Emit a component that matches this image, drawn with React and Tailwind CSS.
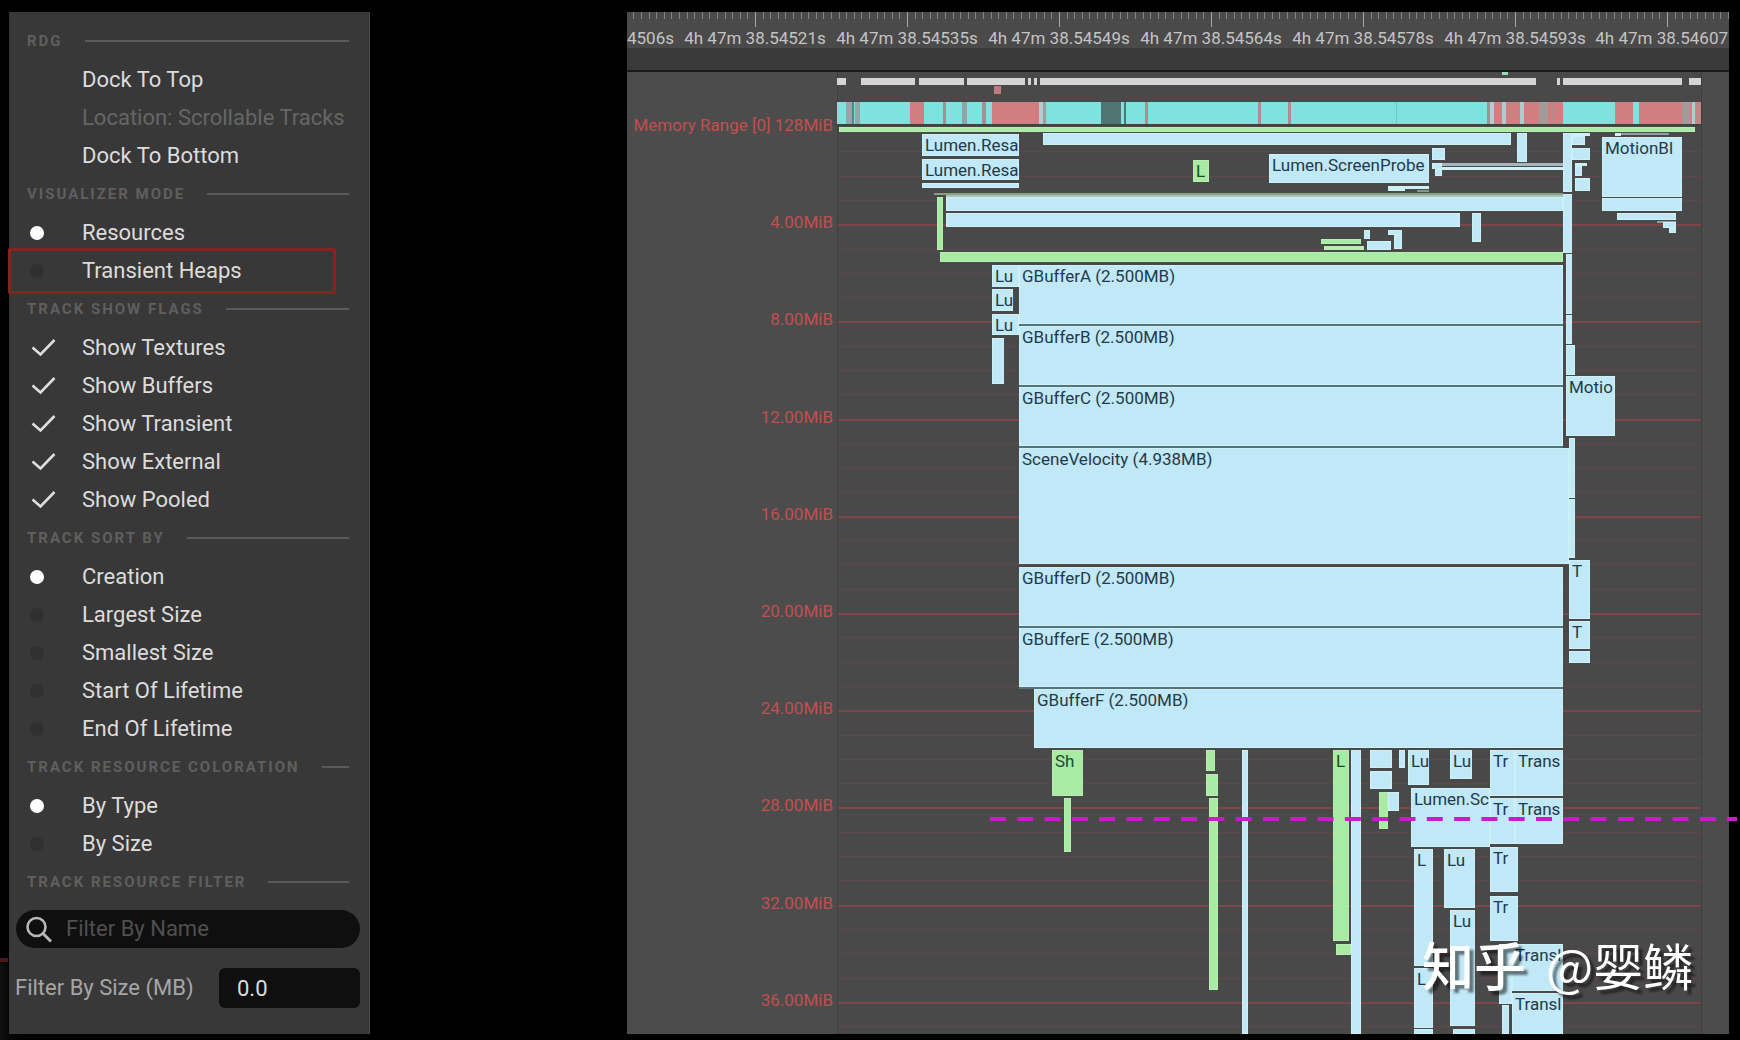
import { Fragment } from "react"

const RULER_LABELS = [
    { x: 674, anchor: "end", text: "4506s" },
    { x: 755, anchor: "middle", text: "4h 47m 38.54521s" },
    { x: 907, anchor: "middle", text: "4h 47m 38.54535s" },
    { x: 1059, anchor: "middle", text: "4h 47m 38.54549s" },
    { x: 1211, anchor: "middle", text: "4h 47m 38.54564s" },
    { x: 1363, anchor: "middle", text: "4h 47m 38.54578s" },
    { x: 1515, anchor: "middle", text: "4h 47m 38.54593s" },
    { x: 1728, anchor: "end", text: "4h 47m 38.54607" },
]

const SIZE_LABELS = [
    "Memory Range [0] 128MiB",
    "4.00MiB",
    "8.00MiB",
    "12.00MiB",
    "16.00MiB",
    "20.00MiB",
    "24.00MiB",
    "28.00MiB",
    "32.00MiB",
    "36.00MiB",
]

// every bar below is [x1, y1, x2, y2, label?]
const PASSES = [
    [837, 846], [861, 915], [919, 964], [967, 1025], [1028, 1031], [1034, 1037],
    [1040, 1536], [1557, 1560], [1563, 1682], [1689, 1701],
]

// [x1, x2, fill]
const RANGES = [
    [837, 1701, "#7de3df"],
    [837, 839, "#a3cfd0"],
    [846, 852, "#94a8ac"],
    [852, 854, "#4f8a86"],
    [855, 860, "#94a8ac"],
    [910, 924, "#cf7f80"],
    [943, 946, "#a58f93"],
    [962, 967, "#90a5a6"],
    [982, 986, "#a58f93"],
    [992, 1039, "#cf7f80"],
    [1039, 1043, "#b4cdd0"],
    [1043, 1046, "#9a9fa3"],
    [1101, 1121, "#507472"],
    [1124, 1126, "#507472"],
    [1145, 1148, "#b08a8d"],
    [1258, 1261, "#b08a8d"],
    [1288, 1291, "#b08a8d"],
    [1396, 1397, "#6bcbc8"],
    [1487, 1490, "#a58f93"],
    [1490, 1494, "#b4cdd0"],
    [1494, 1502, "#cf7f80"],
    [1502, 1506, "#a9cfd0"],
    [1506, 1520, "#cf7f80"],
    [1520, 1524, "#a9cfd0"],
    [1524, 1539, "#cf7f80"],
    [1539, 1548, "#a39b99"],
    [1548, 1563, "#cf7f80"],
    [1552, 1554, "#b98a8a"],
    [1615, 1633, "#cf7f80"],
    [1639, 1682, "#cf7f80"],
    [1682, 1690, "#a39b99"],
    [1690, 1692, "#cf7f80"],
    [1692, 1695, "#a9cfd0"],
    [1695, 1701, "#c68687"],
]

const TEXTURES = [
    [922, 134, 1019, 156, "Lumen.Resa"],
    [922, 159, 1019, 180, "Lumen.Resa"],
    [922, 183, 1019, 188],
    [1043, 133, 1511, 145],
    [1269, 154, 1429, 183, "Lumen.ScreenProbe"],
    [1388, 186, 1429, 189],
    [1388, 189, 1405, 191],
    [1432, 148, 1445, 160],
    [1432, 163, 1442, 169],
    [1435, 169, 1442, 176],
    [1442, 167, 1563, 170],
    [1517, 133, 1527, 162],
    [946, 197, 1563, 211],
    [946, 213, 1460, 227],
    [1472, 213, 1481, 242],
    [1364, 230, 1370, 239],
    [1367, 241, 1391, 250],
    [1388, 230, 1402, 235],
    [1394, 235, 1402, 249],
    [1563, 133, 1572, 192],
    [1563, 194, 1572, 253],
    [1566, 254, 1572, 314],
    [1566, 315, 1572, 344],
    [1566, 345, 1575, 375],
    [1572, 133, 1590, 136],
    [1572, 136, 1585, 145],
    [1572, 148, 1590, 160],
    [1575, 163, 1587, 166],
    [1575, 166, 1582, 176],
    [1575, 178, 1590, 191],
    [1615, 133, 1621, 136],
    [1602, 137, 1682, 197, "MotionBl"],
    [1602, 198, 1682, 211],
    [1617, 213, 1676, 220],
    [1663, 222, 1676, 228],
    [1669, 228, 1676, 233],
    [1566, 376, 1615, 436, "Motio"],
    [992, 265, 1019, 287, "Lu"],
    [992, 289, 1013, 311, "Lu"],
    [992, 314, 1019, 335, "Lu"],
    [992, 338, 1004, 384],
    [1019, 265, 1563, 324, "GBufferA (2.500MB)"],
    [1019, 326, 1563, 385, "GBufferB (2.500MB)"],
    [1019, 387, 1563, 446, "GBufferC (2.500MB)"],
    [1019, 448, 1569, 564, "SceneVelocity (4.938MB)"],
    [1569, 438, 1575, 498],
    [1569, 499, 1575, 558],
    [1569, 560, 1590, 619, "T"],
    [1569, 621, 1590, 649, "T"],
    [1569, 651, 1590, 663],
    [1019, 567, 1563, 626, "GBufferD (2.500MB)"],
    [1019, 628, 1563, 687, "GBufferE (2.500MB)"],
    [1034, 689, 1563, 748, "GBufferF (2.500MB)"],
    [1242, 750, 1248, 1034],
    [1351, 750, 1361, 1034],
    [1370, 750, 1392, 768],
    [1370, 771, 1392, 789],
    [1388, 792, 1399, 811],
    [1399, 750, 1405, 768],
    [1408, 750, 1429, 785, "Lu"],
    [1450, 750, 1472, 779, "Lu"],
    [1411, 788, 1490, 847, "Lumen.Sc"],
    [1490, 750, 1515, 796, "Tr"],
    [1515, 750, 1563, 796, "Trans"],
    [1490, 798, 1515, 844, "Tr"],
    [1515, 798, 1563, 844, "Trans"],
    [1414, 849, 1433, 966, "L"],
    [1414, 968, 1433, 1028, "L"],
    [1414, 1029, 1433, 1034],
    [1444, 849, 1475, 908, "Lu"],
    [1450, 910, 1475, 1026, "Lu"],
    [1453, 1029, 1475, 1034],
    [1490, 847, 1518, 892, "Tr"],
    [1490, 896, 1518, 941, "Tr"],
    [1499, 944, 1512, 1004],
    [1502, 1005, 1509, 1034],
    [1512, 944, 1563, 991, "Transl"],
    [1512, 993, 1563, 1034, "Transl"],
]

const BUFFERS = [
    [839, 127, 1695, 132],
    [1193, 160, 1209, 182, "L"],
    [937, 197, 943, 250],
    [940, 252, 1563, 262],
    [1321, 239, 1361, 244],
    [1324, 246, 1364, 250],
    [1052, 750, 1083, 796, "Sh"],
    [1064, 798, 1071, 852],
    [1206, 750, 1215, 771],
    [1206, 774, 1218, 796],
    [1209, 798, 1218, 990],
    [1333, 750, 1349, 941, "L"],
    [1336, 944, 1351, 955],
    [1379, 792, 1388, 829],
]

function Bars({ bars, fill, edge, ink }) {
    return bars.map(([x1, y1, x2, y2, label]) => (
        <Fragment key={`${x1}-${y1}`}>
            <rect x={x1} y={y1} width={x2 - x1} height={y2 - y1} fill={edge} />
            {x2 - x1 > 4 && y2 - y1 > 4 && (
                <rect x={x1 + 1} y={y1 + 1} width={x2 - x1 - 2} height={y2 - y1 - 2} fill={fill} />
            )}
            {label && (
                <svg x={x1} y={y1} width={x2 - x1} height={y2 - y1}>
                    <text x="3" y="17" fill={ink}>{label}</text>
                </svg>
            )}
        </Fragment>
    ))
}

function Ruler() {
    const ticks = Array.from({ length: 145 }, (_, i) => i)
    return (
        <svg viewBox="627 12 1102 36" className="block w-full bg-[#4a4a4a] font-[Roboto,sans-serif] text-[17px]">
            {ticks.map((i) => {
                const major = i % 20 === 16
                return (
                    <rect
                        key={i}
                        x={Math.round(633.4 + i * 7.6)}
                        y="12"
                        width="1"
                        height={major ? 15 : 7}
                        fill={major ? "#a8a8a8" : "#858585"}
                    />
                )
            })}
            {RULER_LABELS.map(({ x, anchor, text }) => (
                <text key={text} x={x} y="44" textAnchor={anchor} fill="#c4c4c4">{text}</text>
            ))}
        </svg>
    )
}

function Tracks() {
    return (
        <svg
            viewBox="627 72 1102 962"
            className="block w-full overflow-visible bg-[#4c4c4c] font-[Roboto,sans-serif] text-[17px]"
        >
            {/* Allocation area */}
            <rect x="837" y="72" width="865" height="962" fill="#494949" />
            <rect x="837" y="72" width="1" height="962" fill="#3f3f3f" />
            <rect x="1701" y="72" width="1" height="962" fill="#3f3f3f" />

            {/* Memory grid, one line per MiB */}
            {Array.from({ length: 37 }, (_, i) => i + 1).map((i) => (
                <rect
                    key={i}
                    x="838"
                    y={Math.round(127 + i * 24.3)}
                    width="863"
                    height={i % 4 === 0 ? 2 : 1}
                    fill={i % 4 === 0 ? "#7c4749" : "#604849"}
                />
            ))}
            {SIZE_LABELS.map((label, i) => (
                <text key={label} x="833" y={Math.round(131 + i * 97.2)} textAnchor="end" fill="#c05050">
                    {label}
                </text>
            ))}

            {/* Passes */}
            {PASSES.map(([x1, x2]) => (
                <rect key={x1} x={x1} y="78" width={x2 - x1} height="7" fill="#d4d4d4" />
            ))}
            <rect x="994" y="86" width="7" height="8" fill="#bf7b80" />
            <rect x="1502" y="72" width="6" height="3" fill="#8fe0b8" />

            {/* Memory range overview */}
            {RANGES.map(([x1, x2, fill]) => (
                <rect key={`${x1}-${x2}`} x={x1} y="102" width={x2 - x1} height="22" fill={fill} />
            ))}
            <rect x="837" y="124" width="864" height="2" fill="#3f4442" />

            {/* Thin allocations */}
            <rect x="934" y="193" width="629" height="2" fill="#86a184" />
            <rect x="946" y="195" width="617" height="2" fill="#aebfb8" />
            <rect x="1442" y="163" width="121" height="3" fill="#a9b5b8" />
            <rect x="1417" y="190" width="12" height="2" fill="#7f9c86" />
            <rect x="1621" y="133" width="48" height="2" fill="#93a0a3" />
            <rect x="1657" y="221" width="19" height="2" fill="#93a0a3" />

            {/* Block outlines between stacked textures */}
            <rect x="1019" y="323" width="544" height="126" fill="#587279" />
            <rect x="1019" y="625" width="544" height="64" fill="#587279" />

            <Bars bars={BUFFERS} fill="#a9eaa5" edge="#b6eeb2" ink="#1d4a2a" />
            <Bars bars={TEXTURES} fill="#c1e8f6" edge="#ccf1f7" ink="#1f3a4a" />

            {/* Budget marker */}
            <line
                x1="990"
                y1="819"
                x2="1737"
                y2="819"
                stroke="#d016d0"
                strokeWidth="4"
                strokeDasharray="16 11.3"
            />

            <g className="font-['Noto_Sans_CJK_SC',sans-serif] drop-shadow-[4px_4px_1px_rgba(0,0,0,0.5)]" fill="#fff">
                <text x="1422" y="986" className="text-[52px] font-medium">知乎</text>
                <text x="1546" y="986" className="text-[50px]">@婴鳞</text>
            </g>
        </svg>
    )
}

function Heading({ children }) {
    return (
        <h2 className="mb-px flex h-[38px] items-center gap-[22px] pr-5 pl-[18px] text-[15px] font-bold tracking-[2px] text-[#5f5f5f]">
            {children}
            <span className="h-[2px] flex-1 bg-[#5a5a5a]" />
        </h2>
    )
}

function Radio({ name, label, checked }) {
    return (
        <label className="flex h-[38px] items-center gap-[38px] pl-[21px]">
            <input
                type="radio"
                name={name}
                defaultChecked={checked}
                className="size-[14px] appearance-none rounded-full bg-[#303030] checked:bg-white"
            />
            {label}
        </label>
    )
}

function Flag({ label }) {
    return (
        <label className="flex h-[38px] items-center gap-[26px] pl-[22px]">
            <input type="checkbox" defaultChecked className="peer sr-only" />
            <svg viewBox="0 0 25 20" className="invisible h-5 w-[25px] peer-checked:visible" fill="none" stroke="#dedede" strokeWidth="2.6">
                <path d="M1.5 9.5 L9.5 16.5 L23.5 2" />
            </svg>
            {label}
        </label>
    )
}

function Menu() {
    return (
        <aside className="w-[361px] shrink-0 border-r border-[#484848] bg-[#383838] pt-[10px] pb-[26px] text-[#dcdcdc]">
            <Heading>RDG</Heading>
            <button className="block h-[38px] w-full pl-[73px] text-left">Dock To Top</button>
            <button disabled className="block h-[38px] w-full pl-[73px] text-left whitespace-nowrap text-[#666666]">
                Location: Scrollable Tracks
            </button>
            <button className="block h-[38px] w-full pl-[73px] text-left">Dock To Bottom</button>

            <Heading>VISUALIZER MODE</Heading>
            <Radio name="mode" label="Resources" checked />
            <div className="relative">
                <Radio name="mode" label="Transient Heaps" />
                <div className="pointer-events-none absolute -top-1 right-[33px] -bottom-1 -left-px rounded-xs border-3 border-[#8c2020]" />
            </div>

            <Heading>TRACK SHOW FLAGS</Heading>
            <Flag label="Show Textures" />
            <Flag label="Show Buffers" />
            <Flag label="Show Transient" />
            <Flag label="Show External" />
            <Flag label="Show Pooled" />

            <Heading>TRACK SORT BY</Heading>
            <Radio name="sort" label="Creation" checked />
            <Radio name="sort" label="Largest Size" />
            <Radio name="sort" label="Smallest Size" />
            <Radio name="sort" label="Start Of Lifetime" />
            <Radio name="sort" label="End Of Lifetime" />

            <Heading>TRACK RESOURCE COLORATION</Heading>
            <Radio name="color" label="By Type" checked />
            <Radio name="color" label="By Size" />

            <Heading>TRACK RESOURCE FILTER</Heading>
            <label className="mt-[9px] mr-[9px] ml-[7px] flex h-[38px] items-center gap-[13px] rounded-full bg-[#0f0f0f] pr-4 pl-[9px]">
                <svg viewBox="0 0 28 28" className="size-7 shrink-0" fill="none" stroke="#b8b8b8" strokeWidth="2.6">
                    <circle cx="11.5" cy="12" r="9" />
                    <path d="M18 18.5 L26 26.5" strokeWidth="3" />
                </svg>
                <input
                    aria-label="Filter By Name"
                    placeholder="Filter By Name"
                    className="w-full min-w-0 bg-transparent outline-none placeholder:text-[#505050]"
                />
            </label>
            <div className="mt-5 flex items-center justify-between pr-[9px] pl-[6px]">
                <label htmlFor="size" className="text-[#a6a6a6]">Filter By Size (MB)</label>
                <input
                    id="size"
                    defaultValue="0.0"
                    className="h-10 w-[141px] rounded-md bg-[#0f0f0f] px-[18px] outline-none"
                />
            </div>
        </aside>
    )
}

export default function App() {
    return (
        <div className="relative min-h-screen bg-black pt-3 font-[Roboto,sans-serif] text-[22px] leading-7">
            <div className="absolute bottom-0 left-0 h-[82px] w-full bg-linear-to-r from-[#101012] from-0% to-black to-2%" />
            <div className="absolute bottom-[78px] left-0 h-1 w-2 bg-[#4a1818]" />
            <div className="relative flex items-start justify-between gap-[257px] pr-[11px] pl-[9px]">
                <Menu />
                <main className="min-w-0 flex-1">
                    <Ruler />
                    <div className="h-6 border-b-2 border-[#1a1a1a] bg-[#393939]" />
                    <Tracks />
                </main>
            </div>
        </div>
    )
}
